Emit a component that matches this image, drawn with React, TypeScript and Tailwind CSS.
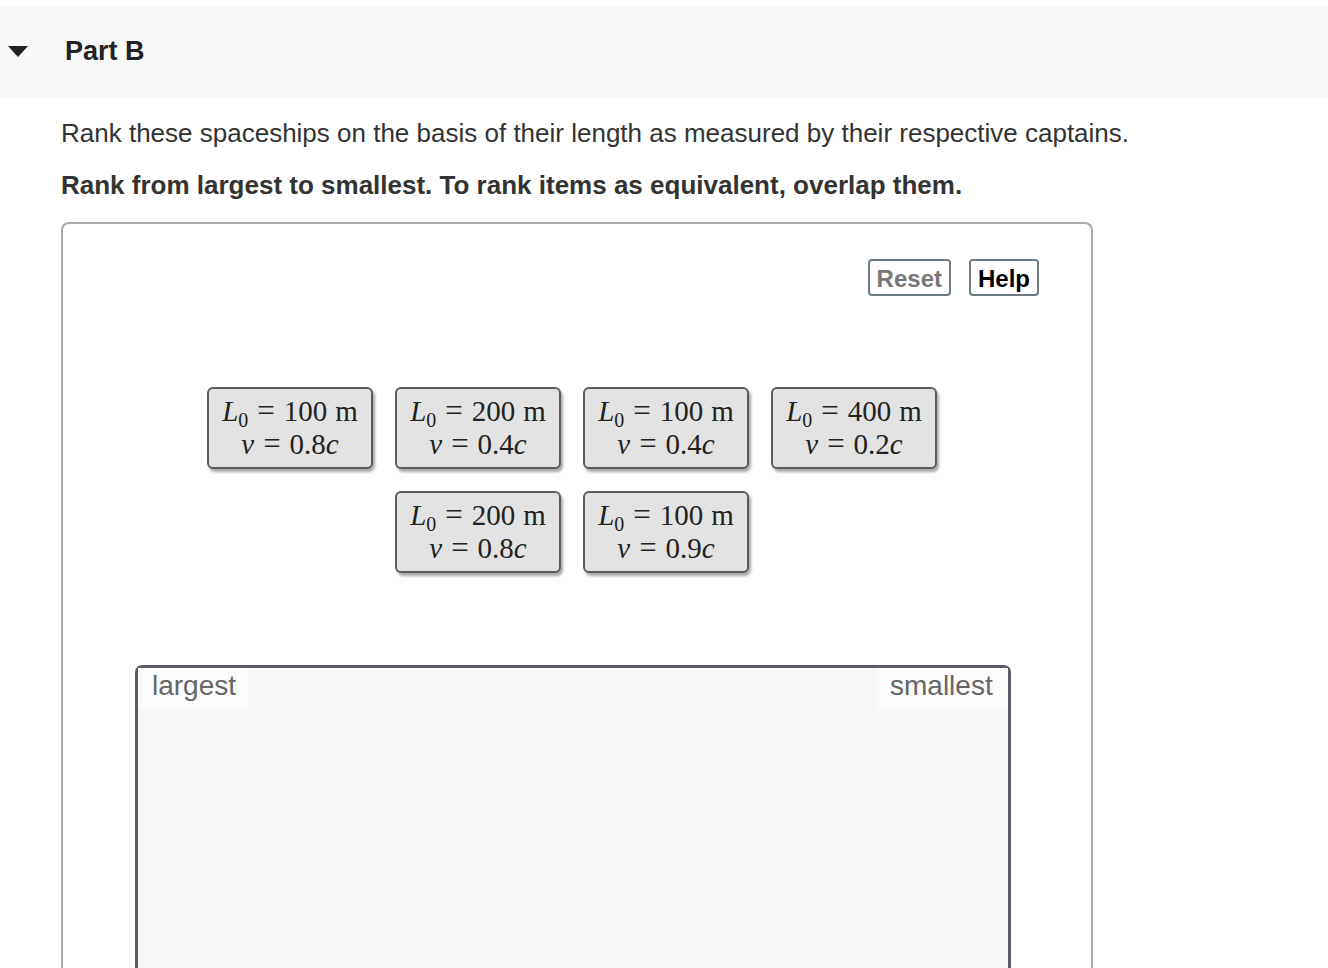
const ships = [
  { L: "100", v: "0.8", col: 1, row: 1 },
  { L: "200", v: "0.4", col: 2, row: 1 },
  { L: "100", v: "0.4", col: 3, row: 1 },
  { L: "400", v: "0.2", col: 4, row: 1 },
  { L: "200", v: "0.8", col: 2, row: 2 },
  { L: "100", v: "0.9", col: 3, row: 2 },
];

const colClass: Record<number, string> = {
  1: "col-start-1",
  2: "col-start-2",
  3: "col-start-3",
  4: "col-start-4",
};
const rowClass: Record<number, string> = { 1: "row-start-1", 2: "row-start-2" };

const ShipCard = ({ L, v }: { L: string; v: string }) => (
  <div className="w-[166px] h-[82px] rounded-[6px] border-2 border-[#585c63] bg-[#e3e3e3] shadow-[2px_3px_3px_rgba(0,0,0,0.35)] flex flex-col items-center justify-center font-['Liberation_Serif',serif] text-[29px] leading-[30px] text-[#222] pb-[1px]">
    <div className="whitespace-nowrap">
      <span className="italic">L</span>
      <span className="text-[20px] relative top-[6px]">0</span>
      <span className="mx-[9px] text-[31px]">=</span>
      <span>{L}</span>
      <span className="ml-[8px]">m</span>
    </div>
    <div className="whitespace-nowrap">
      <span className="italic">v</span>
      <span className="mx-[9px] text-[31px]">=</span>
      <span>{v}</span>
      <span className="italic">c</span>
    </div>
  </div>
);

const App = () => {
  return (
    <div className="min-h-screen bg-white pt-[6px] font-['Liberation_Sans',Arial,sans-serif] text-[#222] overflow-hidden h-[968px]">
      {/* Header */}
      <div className="bg-[#f8f8f8] h-[91px] flex items-center">
        <svg width="20" height="12" viewBox="0 0 20 12" className="ml-[8px] mt-[1px]">
          <path d="M0 0 L20 0 L10 11 Z" fill="#222" />
        </svg>
        <h2 className="ml-[37px] text-[27px] font-bold text-[#222]">Part B</h2>
      </div>

      <div className="pl-[61px]">
        <p className="mt-[21px] text-[26px] leading-[30px] text-[#333]">
          Rank these spaceships on the basis of their length as measured by their respective captains.
        </p>
        <p className="mt-[22px] text-[26px] leading-[30px] font-bold text-[#333]">
          Rank from largest to smallest. To rank items as equivalent, overlap them.
        </p>

        {/* Ranking widget */}
        <div className="mt-[22px] w-[1032px] h-[800px] rounded-t-[8px] border-2 border-b-0 border-[#aaaaaa] bg-white">
          <div className="flex justify-end gap-[18px] pr-[52px] pt-[35px]">
            <button className="h-[37px] px-[7px] rounded-[4px] border-2 border-[#6d7c84] text-[24px] font-bold text-[#777]">
              Reset
            </button>
            <button className="h-[37px] px-[7px] rounded-[4px] border-2 border-[#6d7c84] text-[24px] font-bold text-black">
              Help
            </button>
          </div>

          <div className="mt-[91px] ml-[144px] grid grid-cols-[repeat(4,166px)] gap-x-[22px] gap-y-[22px]">
            {ships.map((s, i) => (
              <div key={i} className={`${colClass[s.col]} ${rowClass[s.row]}`}>
                <ShipCard L={s.L} v={s.v} />
              </div>
            ))}
          </div>

          <div className="mt-[92px] ml-[72px] w-[876px] h-[400px] rounded-t-[7px] border-[3px] border-b-0 border-[#5c5c68] bg-[#f7f7f7] flex justify-between items-start">
            <div className="bg-[#fbfbfb] h-[41px] w-[110px] pl-[14px] text-[28px] leading-[36px] text-[#666]">
              largest
            </div>
            <div className="bg-[#fbfbfb] h-[41px] w-[132px] pl-[14px] text-[28px] leading-[36px] text-[#666]">
              smallest
            </div>
          </div>
        </div>
      </div>
    </div>
  );
};

export default App;
